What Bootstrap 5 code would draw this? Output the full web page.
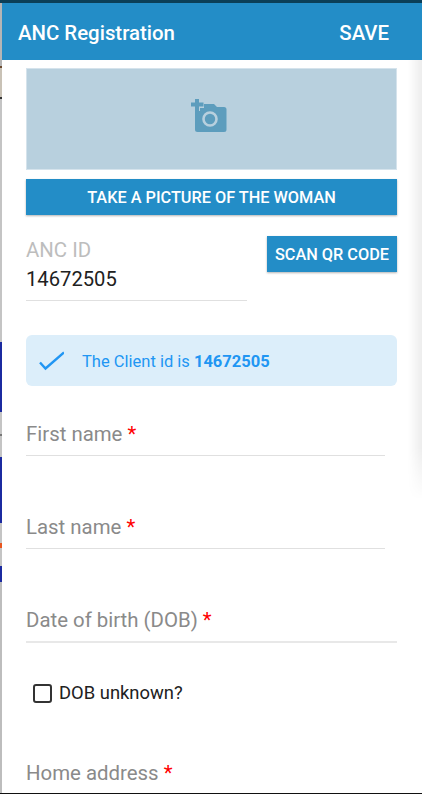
<!DOCTYPE html>
<html lang="en">
<head>
<meta charset="utf-8">
<title>ANC Registration</title>
<link rel="stylesheet" href="https://cdn.jsdelivr.net/npm/bootstrap@5.3.0/dist/css/bootstrap.min.css">
<style>
html,body{height:794px;overflow:hidden;background:#fff;}
body{font-family:Roboto,"Liberation Sans",sans-serif;color:#212121;}
.shell{height:794px;overflow:hidden;position:relative;border-bottom:1px solid #111;}
.topline{height:3px;background:#0b3f58;flex:none;}
.edge{width:2px;flex:none;}
.edge i{display:block;flex:none;}
.e0{height:3px;background:#0b3f58;}
.e1{height:63px;background:#b5b5b5;}
.e2{height:2px;background:#6b4a30;}
.e3{height:29px;background:#c9c2b6;}
.e4{height:2px;background:#333;}
.e5{height:243px;background:#c4c4c4;}
.e6{height:70px;background:#1b2aa0;}
.e6b{height:22px;background:#c4c4c4;}
.e6c{height:2px;background:#777;}
.e6d{height:21px;background:#c4c4c4;}
.e6e{height:66px;background:#1b2aa0;}
.e7{height:20px;background:#c4c4c4;}
.e8{height:5px;background:#e8561f;}
.e9{height:18px;background:#c4c4c4;}
.e10{height:16px;background:#1b2aa0;}
.e11{height:212px;background:#bdbdbd;}
.appbar{height:57px;flex:none;background:#238dc7;color:#fff;padding:3px 33px 0 16px;}
.apptitle,.appsave{font-size:20.4px;font-weight:500;}
.formarea{flex:none;padding:8px 25px 0 24px;}
.photo{height:102px;background:#b8d0de;border:1px solid #d5e3ec;}
.photo svg{margin:0 6px 7px 0;}
.bluebtn{background:#238dc7;color:#fff;border:0;border-radius:0;font-weight:500;box-shadow:0 1px 2px rgba(0,0,0,.3);padding:2px 0 0;}
.bluebtn:hover,.bluebtn:focus{background:#238dc7;color:#fff;}
.takebtn{height:36px;margin-top:9px;font-size:16.3px;}
.idrow{margin-top:21px;height:99px;}
.idfield{width:221px;height:65px;border-bottom:1px solid #e0e0e0;padding-top:3px;}
.idlabel{font-size:20.4px;line-height:22px;color:#bdbdbd;}
.idvalue{font-size:20.2px;line-height:26px;margin-top:5px;color:#212121;}
.scanbtn{width:130px;height:36px;font-size:16.3px;}
.okbox{height:51px;background:#dceefa;border-radius:6px;color:#2196f3;font-size:16.5px;padding:3px 0 0 13px;}
.okbox svg{margin:-3px 18px 0 0;flex:none;}
.field{height:93px;}
.fieldtext{font-size:20.4px;line-height:24px;color:#8a8a8a;}
.field.shortf .rule{width:359px;}
.rule{height:1px;background:#e0e0e0;margin-top:9px;}
.field.fullf{height:auto;}
.field.fullf .rule{height:2px;background:#e8e8e8;}
.req{color:#f00;}
.firstf{margin-top:36px;}
.dobrow{margin-left:7px;margin-top:40px;height:20px;}
.dobbox{width:19px;height:19px;border:2px solid #333;border-radius:3px;margin-right:7px;flex:none;}
.doblabel{font-size:18.4px;color:#212121;}
.homef{margin-top:58px;}
.rshadow{position:absolute;top:60px;right:0;width:14px;height:440px;background:linear-gradient(to right,rgba(0,0,0,0),rgba(0,0,0,.07));-webkit-mask-image:linear-gradient(to bottom,#000 88%,transparent);mask-image:linear-gradient(to bottom,#000 88%,transparent);}
</style>
</head>
<body>
<div class="shell d-flex">
  <div class="edge d-flex flex-column">
    <i class="e0"></i><i class="e1"></i><i class="e2"></i><i class="e3"></i><i class="e4"></i><i class="e5"></i><i class="e6"></i><i class="e6b"></i><i class="e6c"></i><i class="e6d"></i><i class="e6e"></i><i class="e7"></i><i class="e8"></i><i class="e9"></i><i class="e10"></i><i class="e11"></i>
  </div>
  <div class="flex-grow-1 d-flex flex-column">
    <div class="topline"></div>
    <header class="appbar d-flex align-items-center justify-content-between">
      <span class="apptitle">ANC Registration</span>
      <span class="appsave">SAVE</span>
    </header>
    <main class="formarea">
      <div class="photo d-flex align-items-center justify-content-center">
        <svg width="36" height="33" viewBox="0 0 36 33" aria-hidden="true">
          <path fill="#5d9dbd" d="M4 12H9V9H13V5H23L26 8H33a2.500 2.500 0 0 1 2.500 2.500V30.500a2.500 2.500 0 0 1-2.500 2.500H6.500a2.500 2.500 0 0 1-2.500-2.500Z"/>
          <path fill="#5d9dbd" d="M0 3.500h4V0h4v3.500h4.500v4H8V13H4V7.500H0Z"/>
          <circle cx="19" cy="20" r="6.500" fill="none" stroke="#b8d0de" stroke-width="2.600"/>
        </svg>
      </div>
      <button type="button" class="btn bluebtn takebtn w-100">TAKE A PICTURE OF THE WOMAN</button>
      <div class="idrow d-flex justify-content-between align-items-start">
        <div class="idfield">
          <div class="idlabel">ANC ID</div>
          <div class="idvalue">14672505</div>
        </div>
        <button type="button" class="btn bluebtn scanbtn">SCAN QR CODE</button>
      </div>
      <div class="okbox d-flex align-items-center">
        <svg width="25" height="20" viewBox="0 0 25 20" aria-hidden="true"><path d="M1 11.500L6.500 17.500L25 1.500" fill="none" stroke="#2196f3" stroke-width="2.400"/></svg>
        <span>The Client id is <b>14672505</b></span>
      </div>
      <div class="field shortf firstf"><div class="fieldtext">First name <span class="req">*</span></div><div class="rule"></div></div>
      <div class="field shortf"><div class="fieldtext">Last name <span class="req">*</span></div><div class="rule"></div></div>
      <div class="field fullf"><div class="fieldtext">Date of birth (DOB) <span class="req">*</span></div><div class="rule"></div></div>
      <div class="dobrow d-flex align-items-center"><span class="dobbox"></span><span class="doblabel">DOB unknown?</span></div>
      <div class="fieldtext homef">Home address <span class="req">*</span></div>
    </main>
  </div>
  <div class="rshadow"></div>
</div>
<script src="https://cdn.jsdelivr.net/npm/bootstrap@5.3.0/dist/js/bootstrap.bundle.min.js"></script>
</body>
</html>
